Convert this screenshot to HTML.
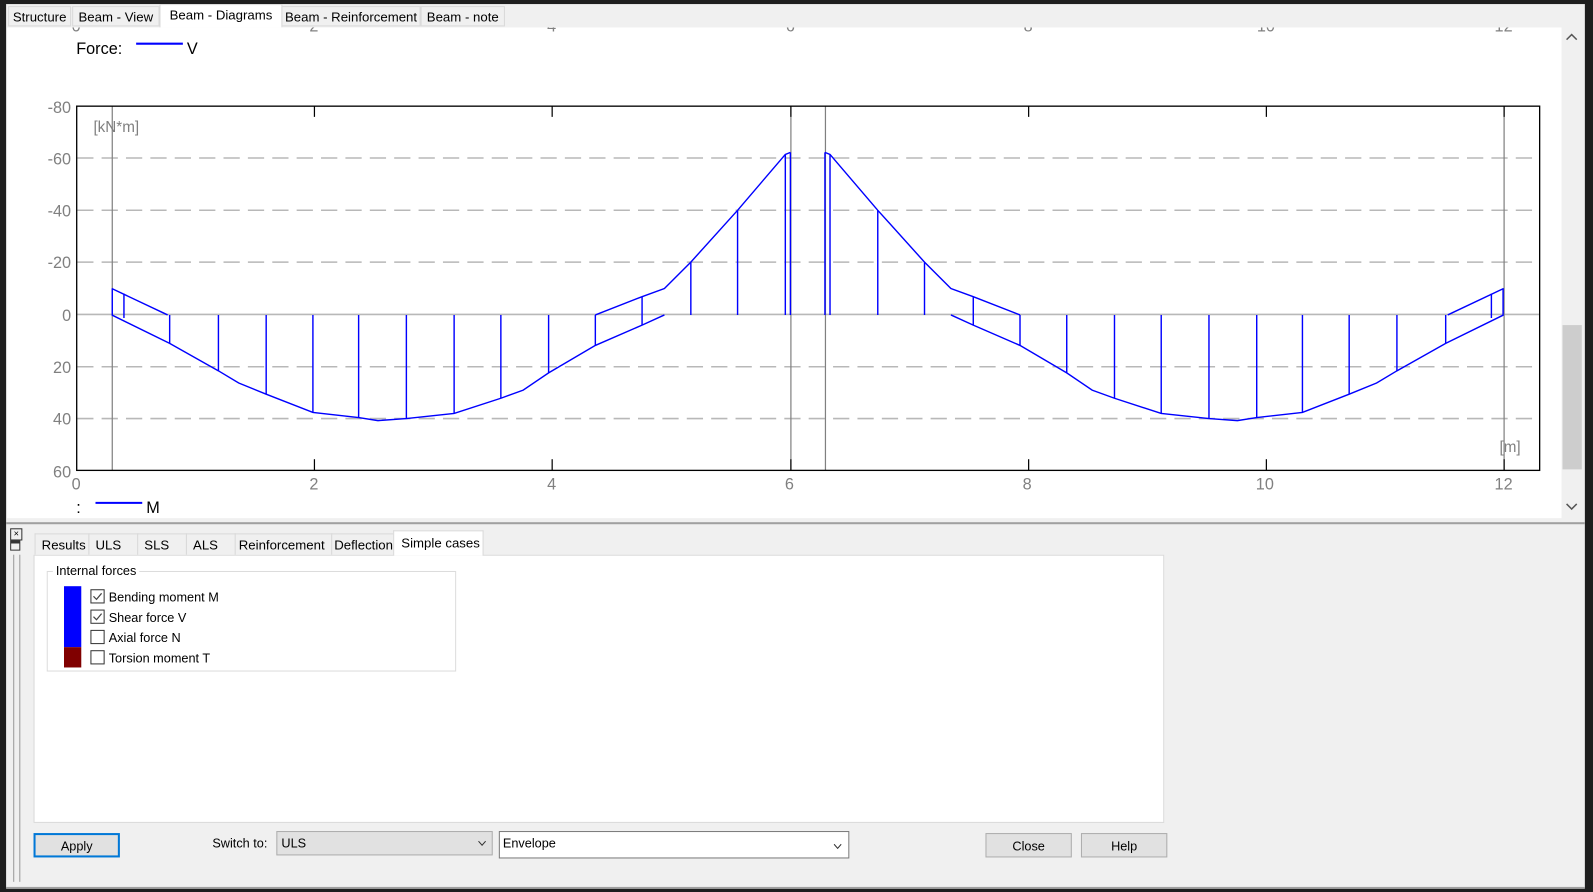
<!DOCTYPE html>
<html><head><meta charset="utf-8"><style>
html,body{margin:0;padding:0;width:1593px;height:892px;overflow:hidden;background:#1e1e1e;font-family:"Liberation Sans",sans-serif;}
#w{position:absolute;left:0;top:0;width:1568px;height:878px;transform:scale(1.01594);transform-origin:0 0;}
.abs{position:absolute}
.tab{position:absolute;top:6px;height:20px;background:#f0f0f0;border:1px solid #d9d9d9;font-size:13px;line-height:20px;text-align:center;color:#000;box-sizing:border-box}
.t2{position:absolute;top:525px;height:21px;background:#f0f0f0;border:1px solid #d9d9d9;border-bottom:none;font-size:13px;line-height:21px;padding-left:6px;box-sizing:border-box}
.cb{position:absolute;left:89px;width:14px;height:14px;border:1px solid #333;background:#fff;box-sizing:border-box}
.lb{position:absolute;left:107px;font-size:12.5px}
.btn{position:absolute;top:820px;height:24px;background:#e1e1e1;border:1px solid #adadad;box-sizing:border-box;font-size:12.5px;text-align:center;line-height:24px}
</style></head><body><div id="w">
<div class="abs" style="left:6px;top:4px;width:1554px;height:870px;background:#f0f0f0"></div>
<div class="tab" style="left:8px;width:62px">Structure</div>
<div class="tab" style="left:71px;width:86px">Beam - View</div>
<div class="tab" style="left:157px;top:4px;height:23px;width:121px;background:#fff;border-bottom:none">Beam - Diagrams</div>
<div class="tab" style="left:277px;width:137px">Beam - Reinforcement</div>
<div class="tab" style="left:414px;width:83px">Beam - note</div>
<div class="abs" style="left:7px;top:27px;width:1530px;height:483px;background:#fff;overflow:hidden">
<svg width="1530" height="483" style="position:absolute;left:0;top:0" viewBox="7 27 1530 483" font-family="Liberation Sans, sans-serif">
<g fill="#808080" font-size="16" text-anchor="middle">
<text x="75" y="31">0</text><text x="309" y="31">2</text><text x="543" y="31">4</text><text x="778" y="31">6</text><text x="1012" y="31">8</text><text x="1246" y="31">10</text><text x="1480" y="31">12</text>
</g>
<text x="75" y="53" font-size="16" fill="#000">Force:</text>
<line x1="134" y1="43" x2="180" y2="43" stroke="#00f" stroke-width="2"/>
<text x="184" y="53" font-size="16" fill="#000">V</text>
<g stroke="#b8b8b8" stroke-width="1.5" stroke-dasharray="16,8">
<line x1="76" y1="155.5" x2="1515" y2="155.5"/><line x1="76" y1="207" x2="1515" y2="207"/><line x1="76" y1="258" x2="1515" y2="258"/><line x1="76" y1="361" x2="1515" y2="361"/><line x1="76" y1="412" x2="1515" y2="412"/>
</g>
<line x1="76" y1="309.5" x2="1515" y2="309.5" stroke="#b8b8b8" stroke-width="1.5"/>
<g stroke="#808080" stroke-width="1.2"><line x1="110.5" y1="104" x2="110.5" y2="463"/><line x1="778.5" y1="104" x2="778.5" y2="463"/><line x1="812.5" y1="104" x2="812.5" y2="463"/><line x1="1480.5" y1="104" x2="1480.5" y2="463"/></g>
<rect x="75.5" y="104.5" width="1440" height="358.5" fill="none" stroke="#000" stroke-width="1.3"/>
<g stroke="#000" stroke-width="1.2">
<line x1="309.5" y1="104" x2="309.5" y2="115"/><line x1="543.5" y1="104" x2="543.5" y2="115"/><line x1="778.5" y1="104" x2="778.5" y2="115"/><line x1="1012.5" y1="104" x2="1012.5" y2="115"/><line x1="1246.5" y1="104" x2="1246.5" y2="115"/><line x1="1480.5" y1="104" x2="1480.5" y2="115"/>
<line x1="309.5" y1="452" x2="309.5" y2="463"/><line x1="543.5" y1="452" x2="543.5" y2="463"/><line x1="778.5" y1="452" x2="778.5" y2="463"/><line x1="1012.5" y1="452" x2="1012.5" y2="463"/><line x1="1246.5" y1="452" x2="1246.5" y2="463"/><line x1="1480.5" y1="452" x2="1480.5" y2="463"/>
</g>
<g fill="#808080" font-size="16" text-anchor="end">
<text x="70" y="111">-80</text><text x="70" y="162">-60</text><text x="70" y="213">-40</text><text x="70" y="264">-20</text><text x="70" y="316">0</text><text x="70" y="367">20</text><text x="70" y="418">40</text><text x="70" y="470">60</text>
</g>
<g fill="#808080" font-size="16" text-anchor="middle">
<text x="75" y="482">0</text><text x="309" y="482">2</text><text x="543" y="482">4</text><text x="777" y="482">6</text><text x="1011" y="482">8</text><text x="1245" y="482">10</text><text x="1480" y="482">12</text>
</g>
<text x="92" y="130" font-size="15" fill="#808080">[kN*m]</text>
<text x="1476" y="445" font-size="15" fill="#808080">[m]</text>
<g id="L" fill="none" stroke="#00f" stroke-width="1.4">
<polyline points="110,284 165,310"/>
<polyline points="110,310 167,338 215,365 235,377 262,388 308,406 353,411 372,414 400,412 447,407 493,392 515,384 540,367 586,340 632,320 654,310"/>
<polyline points="586,310 632,292 654,284 680,258 726,207 773,152 778,150"/>
<path d="M110.5 284V310M122 289V313M167 310V338M215 310V365M262 310V388M308 310V406M353 310V411M400 310V412M447 310V407M493 310V392M540 310V367M586 310V340M632 292V320M680 258V310M726 207V310M773 152V310M778 150V310"/>
</g>
<use href="#L" transform="translate(1590,0) scale(-1,1)"/>
<text x="75" y="505" font-size="16" fill="#000">:</text>
<line x1="94" y1="495" x2="140" y2="495" stroke="#00f" stroke-width="2"/>
<text x="144" y="505" font-size="16" fill="#000">M</text>
</svg>
</div>
<div class="abs" style="left:1537px;top:27px;width:21px;height:483px;background:#f0f0f0"></div>
<div class="abs" style="left:1538px;top:320px;width:19px;height:142px;background:#cdcdcd"></div>
<svg class="abs" style="left:1541px;top:32px" width="12" height="10"><path d="M1 7L6 2L11 7" fill="none" stroke="#555" stroke-width="1.5"/></svg>
<svg class="abs" style="left:1541px;top:493px" width="12" height="10"><path d="M1 3L6 8L11 3" fill="none" stroke="#555" stroke-width="1.5"/></svg>
<div class="abs" style="left:6px;top:514px;width:1554px;height:2px;background:#a0a0a0"></div>
<div class="abs" style="left:10px;top:520px;width:10px;height:10px;border:1px solid #333;font-size:9px;line-height:9px;text-align:center;background:#f0f0f0">×</div>
<div class="abs" style="left:10px;top:532px;width:10px;height:10px;border:1px solid #333;box-sizing:border-box;border-top-width:3px"></div>
<div class="abs" style="left:13px;top:546px;width:5px;height:322px;border-left:1px solid #999;border-right:1px solid #999"></div>
<div class="abs" style="left:33px;top:546px;width:1113px;height:264px;background:#fff;border:1px solid #d9d9d9;box-sizing:border-box"></div>
<div class="t2" style="left:34px;width:54px">Results</div>
<div class="t2" style="left:87px;width:49px">ULS</div>
<div class="t2" style="left:135px;width:49px">SLS</div>
<div class="t2" style="left:183px;width:49px">ALS</div>
<div class="t2" style="left:231px;width:96px;padding-left:3px">Reinforcement</div>
<div class="t2" style="left:326px;width:62px;padding-left:2px">Deflection</div>
<div class="t2" style="left:387px;top:522px;height:25px;width:89px;background:#fff;line-height:23px;padding-left:7px">Simple cases</div>
<div class="abs" style="left:46px;top:562px;width:403px;height:99px;border:1px solid #dcdcdc;box-sizing:border-box"></div>
<div class="abs" style="left:52px;top:555px;background:#fff;padding:0 3px;font-size:12.5px">Internal forces</div>
<div class="abs" style="left:63px;top:577px;width:17px;height:60px;background:#00f"></div>
<div class="abs" style="left:63px;top:637px;width:17px;height:20px;background:#800000"></div>
<div class="cb" style="top:580px"></div><svg class="abs" style="left:89px;top:580px" width="14" height="14"><path d="M3 7L6 10L11 4" fill="none" stroke="#444" stroke-width="1.2"/></svg>
<div class="cb" style="top:600px"></div><svg class="abs" style="left:89px;top:600px" width="14" height="14"><path d="M3 7L6 10L11 4" fill="none" stroke="#444" stroke-width="1.2"/></svg>
<div class="cb" style="top:620px"></div>
<div class="cb" style="top:640px"></div>
<div class="lb" style="top:581px">Bending moment M</div>
<div class="lb" style="top:601px">Shear force V</div>
<div class="lb" style="top:621px">Axial force N</div>
<div class="lb" style="top:641px">Torsion moment T</div>
<div class="btn" style="left:33px;width:85px;border:2px solid #0078d7;line-height:22px">Apply</div>
<div class="abs" style="left:209px;top:823px;font-size:12.5px">Switch to:</div>
<div class="abs" style="left:272px;top:818px;width:213px;height:24px;background:#e1e1e1;border:1px solid #adadad;box-sizing:border-box;font-size:12.5px;line-height:22px;padding-left:4px">ULS<svg style="position:absolute;right:5px;top:8px" width="9" height="6"><path d="M1 1L4.5 5L8 1" fill="none" stroke="#333"/></svg></div>
<div class="abs" style="left:491px;top:818px;width:345px;height:27px;background:#fff;border:1px solid #7a7a7a;box-sizing:border-box;font-size:12.5px;line-height:22px;padding-left:3px">Envelope<svg style="position:absolute;right:6px;top:11px" width="9" height="6"><path d="M1 1L4.5 5L8 1" fill="none" stroke="#333"/></svg></div>
<div class="btn" style="left:970px;width:85px">Close</div>
<div class="btn" style="left:1064px;width:85px">Help</div>
<div class="abs" style="left:6px;top:873px;width:1554px;height:2px;background:#a0a0a0"></div>
</div></body></html>
